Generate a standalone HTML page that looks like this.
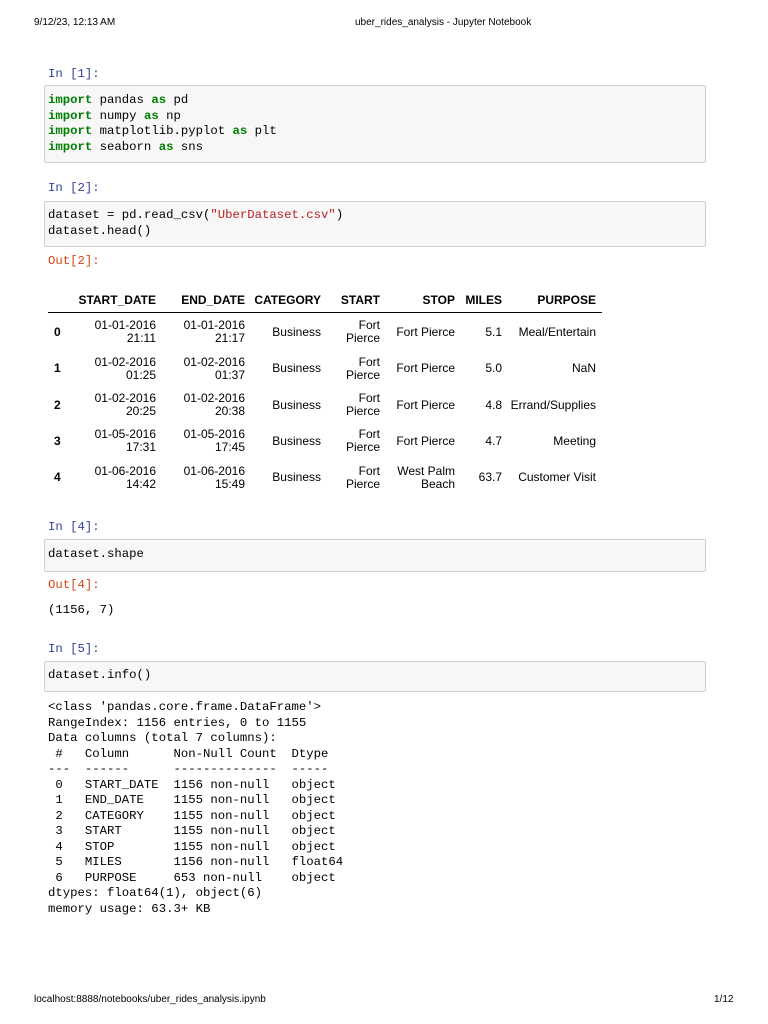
<!DOCTYPE html>
<html><head><meta charset="utf-8"><style>
body{margin:0;width:768px;height:1024px;background:#fff;position:relative;overflow:hidden}
.a{position:absolute;white-space:pre}
.hd{font-family:"Liberation Sans",Arial,sans-serif;font-size:10px;color:#000}
.m{font-family:"Liberation Mono","DejaVu Sans Mono",monospace;font-size:12.3px;line-height:15.5px;color:#000}
.in{color:#303f9f}.out{color:#d84315}
.k{color:#008000;font-weight:bold}.s{color:#ba2121}
.box{position:absolute;left:44px;width:660px;border:1px solid #cfcfcf;background:#f7f7f7;border-radius:2px}
.t{position:absolute;font-family:"Liberation Sans",Arial,sans-serif;font-size:12px;line-height:13px;text-align:right;color:#000}
.b{font-weight:bold}
</style></head><body>
<div class="a hd" style="left:34px;top:17px">9/12/23, 12:13 AM</div>
<div class="a hd" style="left:355px;top:17px">uber_rides_analysis - Jupyter Notebook</div>

<div class="a m in" style="left:48px;top:67px">In [1]:</div>
<div class="box" style="top:85px;height:76px"></div>
<div class="a m" style="left:48px;top:93px"><span class="k">import</span> pandas <span class="k">as</span> pd
<span class="k">import</span> numpy <span class="k">as</span> np
<span class="k">import</span> matplotlib.pyplot <span class="k">as</span> plt
<span class="k">import</span> seaborn <span class="k">as</span> sns</div>

<div class="a m in" style="left:48px;top:181px">In [2]:</div>
<div class="box" style="top:201px;height:44px"></div>
<div class="a m" style="left:48px;top:208px">dataset = pd.read_csv(<span class="s">"UberDataset.csv"</span>)
dataset.head()</div>
<div class="a m out" style="left:48px;top:254px">Out[2]:</div>

<div style="position:absolute;left:48px;top:312px;width:554px;height:1px;background:#000"></div>
<div class="t b" style="left:60px;width:96px;top:294px">START_DATE</div>
<div class="t b" style="left:160px;width:85px;top:294px">END_DATE</div>
<div class="t b" style="left:250px;width:71px;top:294px">CATEGORY</div>
<div class="t b" style="left:330px;width:50px;top:294px">START</div>
<div class="t b" style="left:390px;width:65px;top:294px">STOP</div>
<div class="t b" style="left:460px;width:42px;top:294px">MILES</div>
<div class="t b" style="left:510px;width:86px;top:294px">PURPOSE</div>

<div class="t b" style="left:54px;top:326px;text-align:left">0</div>
<div class="t" style="left:60px;width:96px;top:319px">01-01-2016<br>21:11</div>
<div class="t" style="left:160px;width:85px;top:319px">01-01-2016<br>21:17</div>
<div class="t" style="left:250px;width:71px;top:326px">Business</div>
<div class="t" style="left:330px;width:50px;top:319px">Fort<br>Pierce</div>
<div class="t" style="left:390px;width:65px;top:326px">Fort Pierce</div>
<div class="t" style="left:460px;width:42px;top:326px">5.1</div>
<div class="t" style="left:500px;width:96px;top:326px">Meal/Entertain</div>

<div class="t b" style="left:54px;top:362px;text-align:left">1</div>
<div class="t" style="left:60px;width:96px;top:356px">01-02-2016<br>01:25</div>
<div class="t" style="left:160px;width:85px;top:356px">01-02-2016<br>01:37</div>
<div class="t" style="left:250px;width:71px;top:362px">Business</div>
<div class="t" style="left:330px;width:50px;top:356px">Fort<br>Pierce</div>
<div class="t" style="left:390px;width:65px;top:362px">Fort Pierce</div>
<div class="t" style="left:460px;width:42px;top:362px">5.0</div>
<div class="t" style="left:500px;width:96px;top:362px">NaN</div>

<div class="t b" style="left:54px;top:399px;text-align:left">2</div>
<div class="t" style="left:60px;width:96px;top:392px">01-02-2016<br>20:25</div>
<div class="t" style="left:160px;width:85px;top:392px">01-02-2016<br>20:38</div>
<div class="t" style="left:250px;width:71px;top:399px">Business</div>
<div class="t" style="left:330px;width:50px;top:392px">Fort<br>Pierce</div>
<div class="t" style="left:390px;width:65px;top:399px">Fort Pierce</div>
<div class="t" style="left:460px;width:42px;top:399px">4.8</div>
<div class="t" style="left:500px;width:96px;top:399px">Errand/Supplies</div>

<div class="t b" style="left:54px;top:435px;text-align:left">3</div>
<div class="t" style="left:60px;width:96px;top:428px">01-05-2016<br>17:31</div>
<div class="t" style="left:160px;width:85px;top:428px">01-05-2016<br>17:45</div>
<div class="t" style="left:250px;width:71px;top:435px">Business</div>
<div class="t" style="left:330px;width:50px;top:428px">Fort<br>Pierce</div>
<div class="t" style="left:390px;width:65px;top:435px">Fort Pierce</div>
<div class="t" style="left:460px;width:42px;top:435px">4.7</div>
<div class="t" style="left:500px;width:96px;top:435px">Meeting</div>

<div class="t b" style="left:54px;top:471px;text-align:left">4</div>
<div class="t" style="left:60px;width:96px;top:465px">01-06-2016<br>14:42</div>
<div class="t" style="left:160px;width:85px;top:465px">01-06-2016<br>15:49</div>
<div class="t" style="left:250px;width:71px;top:471px">Business</div>
<div class="t" style="left:330px;width:50px;top:465px">Fort<br>Pierce</div>
<div class="t" style="left:390px;width:65px;top:465px">West Palm<br>Beach</div>
<div class="t" style="left:460px;width:42px;top:471px">63.7</div>
<div class="t" style="left:500px;width:96px;top:471px">Customer Visit</div>

<div class="a m in" style="left:48px;top:520px">In [4]:</div>
<div class="box" style="top:539px;height:31px"></div>
<div class="a m" style="left:48px;top:547px">dataset.shape</div>
<div class="a m out" style="left:48px;top:578px">Out[4]:</div>
<div class="a m" style="left:48px;top:603px">(1156, 7)</div>

<div class="a m in" style="left:48px;top:642px">In [5]:</div>
<div class="box" style="top:661px;height:29px"></div>
<div class="a m" style="left:48px;top:668px">dataset.info()</div>
<div class="a m" style="left:48px;top:700px">&lt;class 'pandas.core.frame.DataFrame'&gt;
RangeIndex: 1156 entries, 0 to 1155
Data columns (total 7 columns):
 #   Column      Non-Null Count  Dtype  
---  ------      --------------  -----  
 0   START_DATE  1156 non-null   object 
 1   END_DATE    1155 non-null   object 
 2   CATEGORY    1155 non-null   object 
 3   START       1155 non-null   object 
 4   STOP        1155 non-null   object 
 5   MILES       1156 non-null   float64
 6   PURPOSE     653 non-null    object 
dtypes: float64(1), object(6)
memory usage: 63.3+ KB</div>

<div class="a hd" style="left:34px;top:994px">localhost:8888/notebooks/uber_rides_analysis.ipynb</div>
<div class="a hd" style="left:714px;top:994px">1/12</div>
</body></html>
